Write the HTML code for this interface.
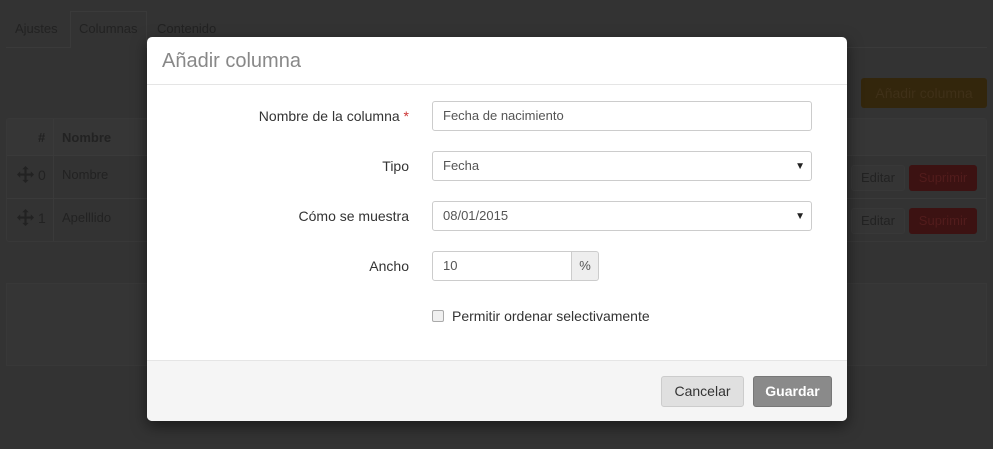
<!DOCTYPE html>
<html><head><meta charset="utf-8"><style>
*{box-sizing:border-box;margin:0;padding:0}
body{width:993px;height:449px;overflow:hidden;background:#333;font-family:"Liberation Sans",Arial,sans-serif;font-size:13px;position:relative}
.a{position:absolute}
.bgt{color:#222}
.lbl{position:absolute;right:584px;color:#333;font-size:14px;text-align:right}
.inp{position:absolute;left:432px;width:380px;height:30px;border:1px solid #ccc;border-radius:3px;background:#fff;padding:6px 10px;color:#555;font-size:13px}
.arr{position:absolute;right:6px;top:9px;font-size:10px;color:#222}
</style></head><body>
<div class="a" style="left:6px;top:47px;width:981px;height:1px;background:#3a3a3a"></div>
<div class="a" style="left:70px;top:11px;width:77px;height:37px;border:1px solid #3a3a3a;border-bottom:none;background:#333"></div>
<div class="a bgt" style="left:15px;top:21px">Ajustes</div>
<div class="a bgt" style="left:79px;top:21px">Columnas</div>
<div class="a bgt" style="left:157px;top:21px">Contenido</div>
<div class="a" style="left:861px;top:78px;width:126px;height:30px;background:#33260c;border-radius:3px;color:#3f3018;font-size:14px;text-align:center;line-height:30px">Añadir columna</div>
<div class="a" style="left:6px;top:118px;width:981px;height:124px;border:1px solid #383838;border-radius:3px"></div>
<div class="a" style="left:7px;top:119px;width:979px;height:36px;background:#363636"></div>
<div class="a" style="left:7px;top:155px;width:979px;height:1px;background:#3a3a3a"></div>
<div class="a" style="left:7px;top:198px;width:979px;height:1px;background:#3a3a3a"></div>
<div class="a" style="left:53px;top:119px;width:1px;height:122px;background:#3a3a3a"></div>
<div class="a bgt" style="left:38px;top:130px;font-weight:bold">#</div>
<div class="a bgt" style="left:62px;top:130px;font-weight:bold">Nombre</div>
<svg class="a" style="left:17px;top:166px" width="17" height="17" viewBox="0 0 16 16"><path d="M8 0L5 3h2v4H3V5L0 8l3 3V9h4v4H5l3 3 3-3H9V9h4v2l3-3-3-3v2H9V3h2z" fill="#222"/></svg>
<div class="a bgt" style="left:38px;top:167px;font-size:14px">0</div>
<div class="a bgt" style="left:62px;top:167px">Nombre</div>
<svg class="a" style="left:17px;top:209px" width="17" height="17" viewBox="0 0 16 16"><path d="M8 0L5 3h2v4H3V5L0 8l3 3V9h4v4H5l3 3 3-3H9V9h4v2l3-3-3-3v2H9V3h2z" fill="#222"/></svg>
<div class="a bgt" style="left:38px;top:210px;font-size:14px">1</div>
<div class="a bgt" style="left:62px;top:210px">Apelllido</div>
<div class="a" style="left:851px;top:165px;width:54px;height:26px;background:#353535;border:1px solid #383838;border-radius:3px;color:#222;text-align:center;line-height:24px">Editar</div>
<div class="a" style="left:909px;top:165px;width:68px;height:26px;background:#3c1212;border-radius:3px;color:#521c1c;text-align:center;line-height:26px">Suprimir</div>
<div class="a" style="left:851px;top:208px;width:54px;height:26px;background:#353535;border:1px solid #383838;border-radius:3px;color:#222;text-align:center;line-height:24px">Editar</div>
<div class="a" style="left:909px;top:208px;width:68px;height:26px;background:#3c1212;border-radius:3px;color:#521c1c;text-align:center;line-height:26px">Suprimir</div>
<div class="a" style="left:6px;top:283px;width:981px;height:83px;background:#353535;border:1px solid #383838"></div>
<div class="a" style="left:147px;top:37px;width:700px;height:384px;background:#fff;border-radius:5px;overflow:hidden;box-shadow:0 5px 15px rgba(0,0,0,.5)">
 <div class="a" style="left:15px;top:13px;font-size:20px;color:#888">Añadir columna</div>
 <div class="a" style="left:0;top:47px;width:700px;height:1px;background:#e5e5e5"></div>
 <div class="a" style="left:0;top:323px;width:700px;height:61px;background:#f5f5f5;border-top:1px solid #e5e5e5"></div>
 <div class="a" style="left:514px;top:339px;width:83px;height:31px;background:#e0e0e0;border:1px solid #ccc;border-radius:3px;color:#333;font-size:14px;text-align:center;line-height:29px">Cancelar</div>
 <div class="a" style="left:606px;top:339px;width:79px;height:31px;background:#8a8a8a;border:1px solid #777;border-radius:3px;color:#fff;font-size:14px;font-weight:bold;text-align:center;line-height:29px">Guardar</div>
</div>
<div class="lbl" style="top:108px">Nombre de la columna <span style="color:#c33">*</span></div>
<div class="inp" style="top:101px">Fecha de nacimiento</div>
<div class="lbl" style="top:158px">Tipo</div>
<div class="inp" style="top:151px">Fecha<span class="arr">▼</span></div>
<div class="lbl" style="top:208px">Cómo se muestra</div>
<div class="inp" style="top:201px">08/01/2015<span class="arr">▼</span></div>
<div class="lbl" style="top:258px">Ancho</div>
<div class="inp" style="top:251px;width:140px;border-radius:3px 0 0 3px">10</div>
<div class="a" style="left:571px;top:251px;width:28px;height:30px;background:#eee;border:1px solid #ccc;border-radius:0 3px 3px 0;color:#555;text-align:center;line-height:28px">%</div>
<div class="a" style="left:432px;top:310px;width:12px;height:12px;border:1px solid #aaa;border-radius:2px;background:#f0f0f0"></div>
<div class="a" style="left:452px;top:308px;color:#333;font-size:14px">Permitir ordenar selectivamente</div>
</body></html>
